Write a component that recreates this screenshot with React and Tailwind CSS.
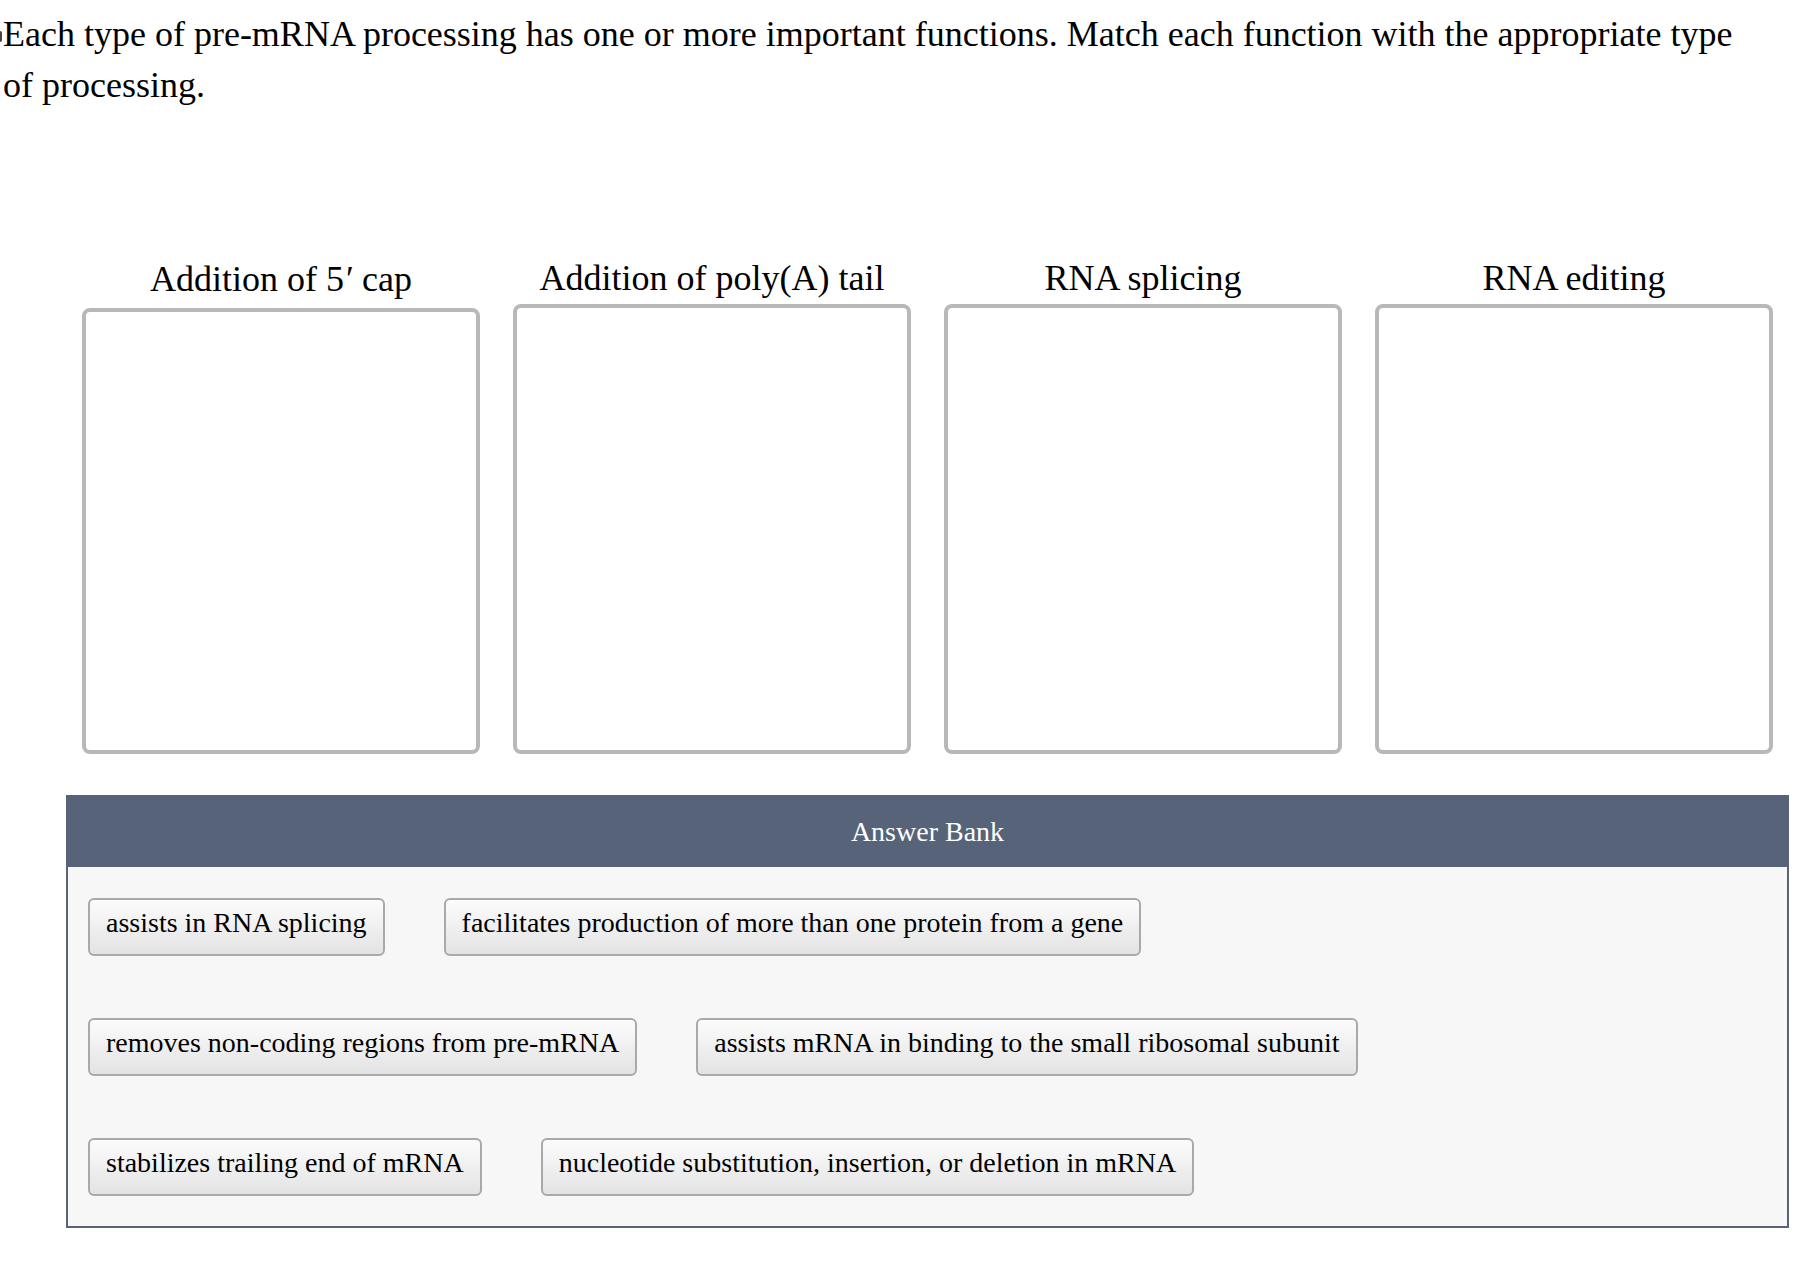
import React from "react";

const columns = [
    { title: "Addition of 5", prime: true, first: true },
    { title: "Addition of poly(A) tail" },
    { title: "RNA splicing" },
    { title: "RNA editing" },
];

const rows = [
    ["assists in RNA splicing", "facilitates production of more than one protein from a gene"],
    ["removes non-coding regions from pre-mRNA", "assists mRNA in binding to the small ribosomal subunit"],
    ["stabilizes trailing end of mRNA", "nucleotide substitution, insertion, or deletion in mRNA"],
];

function Chip({ label }) {
    return (
        <div className="h-[58px] flex items-center px-[16px] pb-[9px] border-2 border-[#a9a9a9] rounded-[6px] bg-linear-to-b from-[#fcfcfc] to-[#e3e3e3] text-[28px] text-black whitespace-nowrap">
            {label}
        </div>
    );
}

export default function App() {
    return (
        <div className="min-h-screen w-full bg-white font-['Liberation_Serif','Times_New_Roman',serif] text-black">
            {/* prompt */}
            <div className="relative w-[1752px] pl-[3px] pt-[9px] text-[36px] leading-[51px]">
                <span className="absolute left-0 top-[31px] w-[2px] h-[11px] bg-[#444] rounded-r-full" />
                Each type of pre-mRNA processing has one or more important functions. Match each function with the appropriate type of processing.
            </div>

            {/* drop targets */}
            <div className="ml-[82px] mt-[146px] flex gap-[33px]">
                {columns.map((col) => (
                    <div key={col.title} className="w-[398px] flex flex-col">
                        <div className={"h-[43px] leading-[43px] text-center text-[36px] whitespace-nowrap " + (col.first ? "pt-[1px]" : "")}>
                            {col.title}
                            {col.prime && (
                                <>
                                    <span className="ml-[2px] mr-[8px]">′</span>cap
                                </>
                            )}
                        </div>
                        <div
                            className={
                                "border-[4px] border-[#b8b8b8] rounded-[8px] bg-white " +
                                (col.first ? "mt-[8px] h-[446px]" : "mt-[4px] h-[450px]")
                            }
                        />
                    </div>
                ))}
            </div>

            {/* answer bank */}
            <div className="ml-[66px] mt-[41px] w-[1723px] border-2 border-[#566379] bg-[#f7f7f7]">
                <div className="h-[70px] bg-[#566379] flex items-center justify-center text-white text-[28px]">
                    Answer Bank
                </div>
                <div className="pl-[20px] pt-[31px] pb-[30px] flex flex-col gap-[62px]">
                    {rows.map((row, i) => (
                        <div key={i} className="flex gap-[59px]">
                            {row.map((label) => (
                                <Chip key={label} label={label} />
                            ))}
                        </div>
                    ))}
                </div>
            </div>
        </div>
    );
}
